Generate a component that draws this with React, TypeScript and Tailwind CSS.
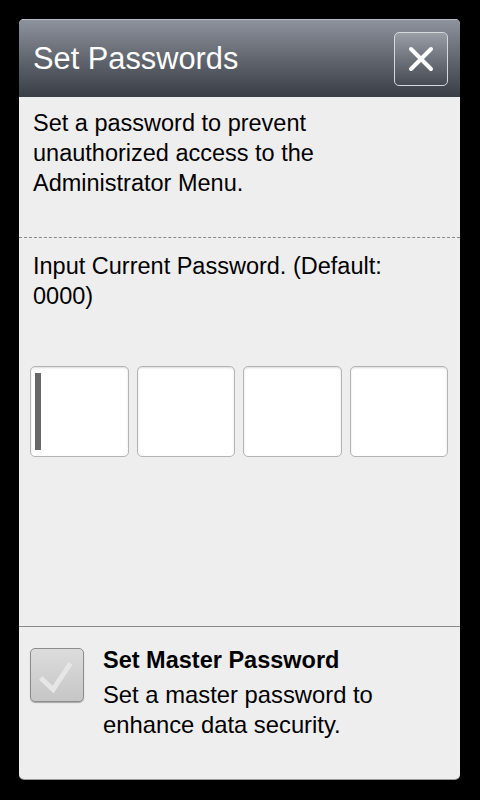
import React from "react";

// Digit slots for the current password
const SLOTS = [0, 1, 2, 3];

export default function App() {
  return (
    <div className="w-[480px] h-[800px] bg-black pt-[19px] px-[19px] font-['Liberation_Sans',Arial,sans-serif]">
      <div className="w-[441px] h-[760px] rounded-[5px] bg-[#eeeeee] flex flex-col overflow-hidden shadow-[0_1px_0_#9a9a9a]">
        {/* Header */}
        <div className="h-[78px] shrink-0 flex items-center justify-between pl-[14px] pr-[12px] bg-gradient-to-b from-[#8d929c] to-[#3a3e46] border-t border-[#b8bcc4]">
          <h1 className="text-white text-[30.8px] leading-none mt-[2px]">Set Passwords</h1>
          <button className="w-[54px] h-[54px] rounded-[5px] border border-[#d6d8dc] bg-gradient-to-b from-[#9a9ea7] to-[#474b53] flex items-center justify-center">
            <svg width="26" height="26" viewBox="0 0 26 26">
              <path d="M3 3 L23 23 M23 3 L3 23" stroke="white" strokeWidth="4" strokeLinecap="round" />
            </svg>
          </button>
        </div>

        {/* Intro */}
        <div className="pl-[14px] pr-[50px] pt-[11px] pb-[39px] border-b border-dashed border-[#8a8a8a] text-[23.5px] leading-[30px] text-black">
          Set a password to prevent unauthorized access to the Administrator Menu.
        </div>

        {/* Current password input */}
        <div className="flex-1 flex flex-col">
          <p className="pl-[14px] pr-[50px] pt-[13px] text-[23.5px] leading-[30px] text-black">
            Input Current Password. (Default: 0000)
          </p>
          <div className="grid grid-cols-4 gap-[8px] pl-[11px] pr-[12px] mt-[55px]">
            {SLOTS.map((i) => (
              <div
                key={i}
                className="relative h-[91px] rounded-[5px] bg-white border border-[#b4b4b4] shadow-[inset_0_1px_2px_rgba(0,0,0,0.15)]"
              >
                {i === 0 && (
                  <div className="absolute left-[4px] top-[6px] bottom-[6px] w-[6px] bg-[#686868]" />
                )}
              </div>
            ))}
          </div>
        </div>

        {/* Master password option */}
        <div className="h-[153px] shrink-0 border-t border-[#8a8a8a] flex gap-[19px] pl-[11px] pt-[21px]">
          <div className="w-[54px] h-[54px] shrink-0 rounded-[5px] border border-[#8c8c8c] bg-gradient-to-b from-[#dcdcdc] to-[#c6c6c6] shadow-[0_1px_1px_rgba(0,0,0,0.3)] flex items-center justify-center">
            <svg width="54" height="54" viewBox="0 0 54 54">
              <path d="M10 30 L23 42 L41 15" fill="none" stroke="#e6e6e6" strokeWidth="5" />
            </svg>
          </div>
          <div className="text-black">
            <div className="font-bold text-[23.5px] leading-[30px] -mt-[3px]">Set Master Password</div>
            <div className="text-[23.8px] leading-[30px] mt-[5px]">
              Set a master password to
              <br />
              enhance data security.
            </div>
          </div>
        </div>
      </div>
    </div>
  );
}
